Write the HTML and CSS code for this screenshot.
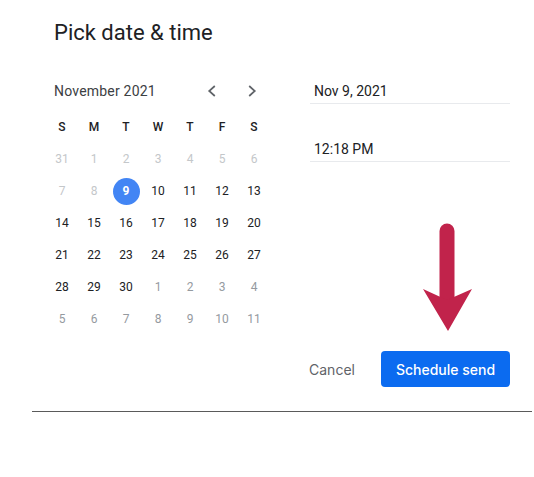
FILE: index.html
```html
<!DOCTYPE html>
<html lang="en">
<head>
    <meta charset="UTF-8">
    <meta name="viewport" content="width=device-width, initial-scale=1.0">
    <title>Pick date &amp; time</title>
    <link rel="stylesheet" href="styles.css">
</head>
<body>
    <div class="dialog">
        <h1 class="dialog-title">Pick date &amp; time</h1>

        <div class="picker">
            <div class="calendar">
                <div class="month-bar">
                    <span class="month-label">November 2021</span>
                    <button class="nav-btn" aria-label="Previous month">
                        <svg viewBox="0 0 20 20" width="20" height="20"><polyline points="12.8,5 7.2,10 12.8,15"/></svg>
                    </button>
                    <button class="nav-btn" aria-label="Next month">
                        <svg viewBox="0 0 20 20" width="20" height="20"><polyline points="7.2,5 12.8,10 7.2,15"/></svg>
                    </button>
                </div>
                <div class="grid">
                    <span class="dow">S</span><span class="dow">M</span><span class="dow">T</span><span class="dow">W</span><span class="dow">T</span><span class="dow">F</span><span class="dow">S</span>

                    <span class="day past">31</span><span class="day past">1</span><span class="day past">2</span><span class="day past">3</span><span class="day past">4</span><span class="day past">5</span><span class="day past">6</span>
                    <span class="day past">7</span><span class="day past">8</span><span class="day"><b class="selected">9</b></span><span class="day">10</span><span class="day">11</span><span class="day">12</span><span class="day">13</span>
                    <span class="day">14</span><span class="day">15</span><span class="day">16</span><span class="day">17</span><span class="day">18</span><span class="day">19</span><span class="day">20</span>
                    <span class="day">21</span><span class="day">22</span><span class="day">23</span><span class="day">24</span><span class="day">25</span><span class="day">26</span><span class="day">27</span>
                    <span class="day">28</span><span class="day">29</span><span class="day">30</span><span class="day next">1</span><span class="day next">2</span><span class="day next">3</span><span class="day next">4</span>
                    <span class="day next">5</span><span class="day next">6</span><span class="day next">7</span><span class="day next">8</span><span class="day next">9</span><span class="day next">10</span><span class="day next">11</span>
                </div>
            </div>

            <div class="fields">
                <div class="field">Nov 9, 2021</div>
                <div class="field">12:18 PM</div>
            </div>
        </div>

        <div class="actions">
            <button class="btn-text">Cancel</button>
            <button class="btn-primary">Schedule send</button>
        </div>

        <!-- pointer to the send button -->
        <svg class="pointer" viewBox="0 0 70 120" width="70" height="120">
            <line x1="37" y1="11" x2="37" y2="82" stroke="#c1234b" stroke-width="15" stroke-linecap="round"/>
            <polygon points="13,69 37,80 62,69 38,111" fill="#c1234b"/>
        </svg>
    </div>
</body>
</html>
```

FILE: styles.css
```css
body {
    margin: 0;
    background: #fff;
    font-family: Roboto, "Liberation Sans", sans-serif;
    color: #202124;
}
.dialog {
    position: relative;
    margin-left: 32px;
    width: 500px;
    box-sizing: border-box;
    padding: 19px 22px 24px;
    border-bottom: 1px solid #5a5a5a;
}
.dialog-title {
    margin: 0;
    font-size: 22px;
    font-weight: 400;
    line-height: 28px;
    color: #202124;
}
.picker {
    display: flex;
    gap: 40px;
    margin-top: 24px;
}
.calendar {
    width: 224px;
    margin-left: -8px;
}
.month-bar {
    display: flex;
    align-items: center;
    height: 40px;
    padding-left: 8px;
}
.month-label {
    flex: 1;
    font-size: 14px;
    letter-spacing: 0.2px;
    color: #3c4043;
}
.nav-btn {
    width: 40px;
    height: 40px;
    border: none;
    background: none;
    padding: 0;
    display: flex;
    align-items: center;
    justify-content: center;
}
.nav-btn:last-child {
    margin-right: -2px;
}
.nav-btn polyline {
    fill: none;
    stroke: #5f6368;
    stroke-width: 1.7;
}
.grid {
    display: grid;
    grid-template-columns: repeat(7, 32px);
    grid-auto-rows: 32px;
}
.dow,
.day {
    display: flex;
    align-items: center;
    justify-content: center;
    font-size: 12px;
}
.dow {
    font-weight: 500;
    color: #202124;
}
.day.past {
    color: #c4c7ca;
}
.day.next {
    color: #959a9f;
}
.selected {
    width: 27px;
    height: 27px;
    border-radius: 50%;
    background: #4285f4;
    color: #fff;
    font-weight: 700;
    display: flex;
    align-items: center;
    justify-content: center;
}
.fields {
    flex: 1;
    padding-top: 8px;
}
.field {
    height: 24px;
    line-height: 24px;
    padding-left: 4px;
    font-size: 14px;
    color: #202124;
    border-bottom: 1px solid #e8eaed;
    margin-bottom: 33px;
}
.actions {
    display: flex;
    justify-content: flex-end;
    align-items: center;
    margin-top: 16px;
}
.btn-text,
.btn-primary {
    border: none;
    font-family: Inter, Roboto, sans-serif;
    font-size: 14px;
    height: 36px;
    padding: 0;
}
.btn-text {
    background: none;
    color: #5f6368;
    font-weight: 400;
    width: 70px;
    margin-right: 14px;
}
.btn-primary {
    border-radius: 4px;
    background: #0b6bf0;
    color: #fff;
    font-weight: 500;
    width: 129px;
}
.pointer {
    position: absolute;
    left: 378px;
    top: 220px;
}
```
